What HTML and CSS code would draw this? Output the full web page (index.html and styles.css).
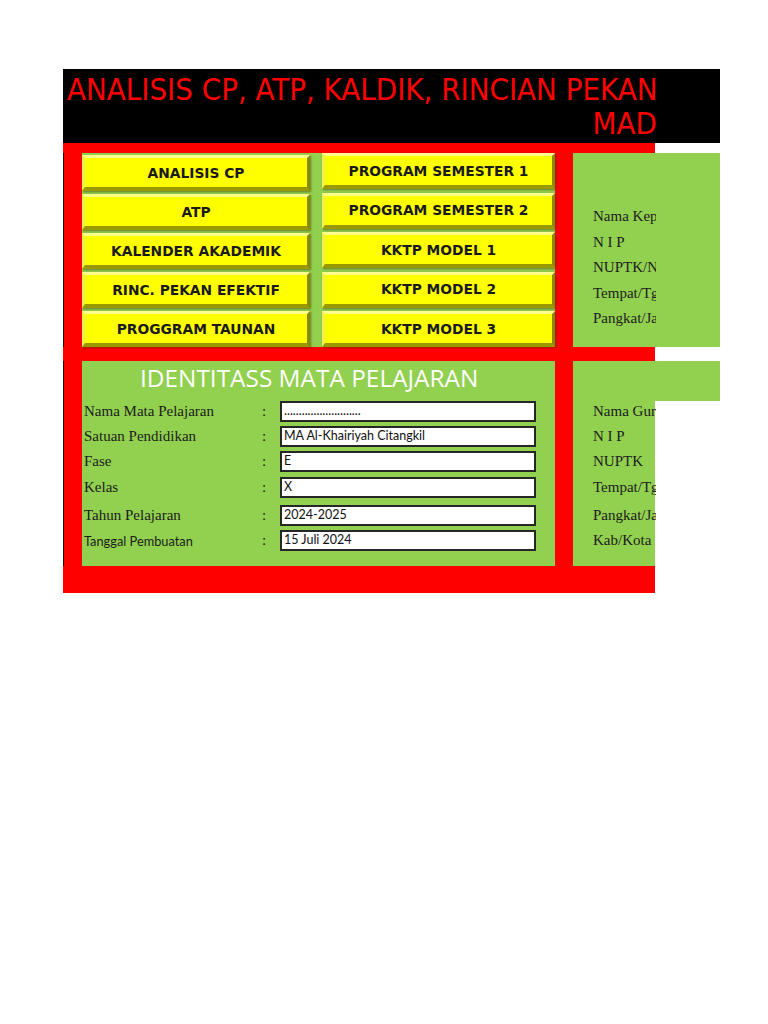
FILE: index.html
```html
<!DOCTYPE html>
<html>
<head>
<meta charset="utf-8">
<link rel="stylesheet" href="styles.css">
</head>
<body>
<div class="page">
  <div class="header">
    <div class="header-clip">
      <div class="h-line">ANALISIS CP, ATP, KALDIK, RINCIAN PEKAN</div>
      <div class="h-line h-right">MAD</div>
    </div>
  </div>
  <div class="board">
    <div class="menu section">
      <div class="btn-col btn-col-left">
        <div class="btn">ANALISIS CP</div>
        <div class="btn">ATP</div>
        <div class="btn">KALENDER AKADEMIK</div>
        <div class="btn">RINC. PEKAN EFEKTIF</div>
        <div class="btn">PROGGRAM TAUNAN</div>
      </div>
      <div class="btn-col btn-col-right">
        <div class="btn">PROGRAM SEMESTER 1</div>
        <div class="btn">PROGRAM SEMESTER 2</div>
        <div class="btn">KKTP MODEL 1</div>
        <div class="btn">KKTP MODEL 2</div>
        <div class="btn">KKTP MODEL 3</div>
      </div>
    </div>
    <div class="side-top">
      <div class="side-clip">
        <div class="side-label">Nama Kep</div>
        <div class="side-label">N I P</div>
        <div class="side-label">NUPTK/N</div>
        <div class="side-label">Tempat/Tg</div>
        <div class="side-label">Pangkat/Ja</div>
      </div>
    </div>
    <div class="ident section rows">
      <div class="ident-title">IDENTITASS MATA PELAJARAN</div>
      <div class="lbl">Nama Mata Pelajaran</div><div class="colon">:</div><div class="box">..........................</div>
      <div class="lbl">Satuan Pendidikan</div><div class="colon">:</div><div class="box">MA Al-Khairiyah Citangkil</div>
      <div class="lbl">Fase</div><div class="colon">:</div><div class="box">E</div>
      <div class="lbl">Kelas</div><div class="colon">:</div><div class="box">X</div>
      <div class="lbl">Tahun Pelajaran</div><div class="colon">:</div><div class="box">2024-2025</div>
      <div class="lbl lbl-sans">Tanggal Pembuatan</div><div class="colon">:</div><div class="box">15 Juli 2024</div>
    </div>
    <div class="side-bottom rows">
      <div class="side-band"></div>
      <div class="side-row">Nama Gur</div>
      <div class="side-row">N I P</div>
      <div class="side-row">NUPTK</div>
      <div class="side-row">Tempat/Tg</div>
      <div class="side-row">Pangkat/Ja</div>
      <div class="side-row">Kab/Kota</div>
    </div>
  </div>
</div>
</body>
</html>
```
FILE: styles.css
```css
* { box-sizing: border-box; }
html, body { margin: 0; padding: 0; background: #fff; }
.page {
  padding-top: 69px;
  padding-left: 63px;
}
.header {
  width: 657px;
  height: 74px;
  background: #000;
  padding-top: 3px;
}
.header-clip {
  width: 597px;
  overflow: hidden;
  color: #ff0000;
  font-family: "DejaVu Sans Condensed", "DejaVu Sans", sans-serif;
  font-size: 30.9px;
  line-height: 34px;
  white-space: nowrap;
}
.h-line { padding-left: 4px; }
.h-right { text-align: right; padding-right: 3px; }

.board {
  width: 592px;
  height: 450px;
  background: #ff0000;
  padding: 10px 0 0 19px;
  display: grid;
  grid-template-columns: 473px 82px;
  grid-template-rows: 194px 205px;
  column-gap: 18px;
  row-gap: 14px;
}
.section { position: relative; }
.section::before {
  content: "";
  position: absolute;
  left: -19px;
  top: 0;
  bottom: 0;
  width: 1px;
  background: #111;
}

/* menu buttons */
.menu {
  display: flex;
  background: #92d050;
}
.btn-col { display: flex; flex-direction: column; }
.btn-col-left {
  width: 240px;
  padding-top: 2px;
  gap: 3px;
}
.btn-col-left .btn { width: 228px; }
.btn-col-right {
  width: 233px;
  gap: 3.5px;
}
.btn {
  height: 36px;
  background: #ffff00;
  border-style: solid;
  border-width: 3px 3px 4px 3px;
  border-color: #ffff8c #8a8a00 #9a9a00 #f0f04a;
  box-shadow: 1px 1px 2px rgba(60, 60, 0, 0.55);
  display: flex;
  align-items: center;
  justify-content: center;
  font-family: "DejaVu Sans", Verdana, sans-serif;
  font-weight: bold;
  font-size: 13.8px;
  color: #1a1a1a;
  white-space: nowrap;
}

/* side panels */
.side-top {
  width: 147px;
  background: #92d050;
}
.side-clip {
  width: 83px;
  overflow: hidden;
  padding-top: 51px;
  padding-left: 20px;
}
.side-label, .side-row, .lbl {
  font-family: "Liberation Serif", "Times New Roman", serif;
  font-size: 15px;
  color: #1c1c1c;
  white-space: nowrap;
}
.side-label { line-height: 25.5px; overflow: hidden; }

/* shared rows */
.rows {
  display: grid;
  grid-template-rows: 38px 24px 26px 25px 26px 30px 21px;
  align-items: center;
}
.ident {
  background: #92d050;
  grid-template-columns: 178px 18px 256px;
  padding-left: 2px;
  align-content: start;
}
.ident-title {
  grid-column: 1 / -1;
  padding-left: 56px;
  font-family: "Open Sans", "DejaVu Sans", sans-serif;
  font-size: 24.4px;
  color: #fff;
  line-height: 30px;
  align-self: start;
  padding-top: 2px;
}
.lbl-sans {
  font-family: Lato, "Open Sans", sans-serif;
  font-size: 12.8px;
}
.colon {
  font-family: "Liberation Serif", serif;
  font-size: 15px;
  color: #1c1c1c;
}
.box {
  height: 21px;
  background: #fff;
  border: 2px solid #262626;
  font-family: Lato, "Open Sans", sans-serif;
  font-size: 12.5px;
  line-height: 16px;
  color: #111;
  padding: 0 2px;
  white-space: nowrap;
  overflow: hidden;
}

.side-bottom {
  background: #92d050;
  align-content: start;
  width: 82px;
}
.side-band {
  width: 147px;
  height: 40px;
  background: #92d050;
  align-self: start;
}
.side-row {
  padding-left: 20px;
  overflow: hidden;
  width: 83px;
}
```
